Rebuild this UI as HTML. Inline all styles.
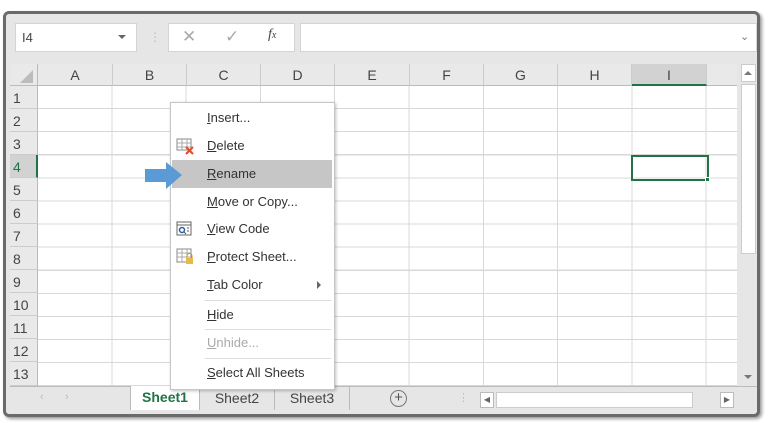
<!DOCTYPE html>
<html><head><style>
*{margin:0;padding:0;box-sizing:border-box}
body{width:768px;height:423px;background:#fff;position:relative;overflow:hidden;font-family:"Liberation Sans",sans-serif}
.a{position:absolute}
.frame{left:3px;top:11px;width:757px;height:406px;border:3px solid #6a6a6a;border-radius:6px;background:#e6e6e6;box-shadow:2px 2px 3px #999}
.grid{left:38px;top:86px;width:699px;height:300px;background:
repeating-linear-gradient(to right,transparent 0,transparent 73.3px,#d8d8d8 73.3px,#d8d8d8 74.3px),
repeating-linear-gradient(to bottom,transparent 0,transparent 22px,#d8d8d8 22px,#d8d8d8 23.1px),#fff}
.ch{top:64px;height:22px;font-size:14px;color:#444;text-align:center;line-height:22px;border-right:1px solid #ccc;border-bottom:1px solid #bbb;background:#e9e9e9}
.rh{left:10px;width:28px;height:23px;font-size:14px;color:#444;padding-left:3px;line-height:24px;border-bottom:1px solid #ccc;border-right:1px solid #bbb;background:#e9e9e9}
.mi{left:207px;font-size:13px;color:#333}
.sep{left:205px;width:126px;height:1px;background:#ddd}
.tab{top:387px;height:23px;font-size:14px;line-height:23px;text-align:center;color:#444;border-right:1px solid #bbb}
</style></head><body>
<div class="a frame"></div>
<div class="a" style="left:15px;top:23px;width:122px;height:29px;background:#fff;border:1px solid #d4d4d4;font-size:13px;color:#444;padding:6px 0 0 6px">I4</div>
<div class="a" style="left:118px;top:35px;width:0;height:0;border-left:4px solid transparent;border-right:4px solid transparent;border-top:4px solid #666"></div>
<div class="a" style="left:149px;top:30px;color:#bbb;font-size:12px">⋮</div>
<div class="a" style="left:168px;top:23px;width:127px;height:29px;background:#fff;border:1px solid #d4d4d4"></div>
<div class="a" style="left:182px;top:27px;color:#aaa;font-size:17px">✕</div>
<div class="a" style="left:225px;top:27px;color:#aaa;font-size:17px">✓</div>
<div class="a" style="left:268px;top:27px;color:#444;font-size:14px;font-style:italic;font-family:'Liberation Serif',serif">f<span style="font-size:10px">x</span></div>
<div class="a" style="left:300px;top:23px;width:457px;height:29px;background:#fff;border:1px solid #d4d4d4"></div>
<div class="a" style="left:740px;top:30px;color:#777;font-size:11px">⌄</div>
<div class="a" style="left:10px;top:64px;width:28px;height:22px;background:#e9e9e9;border-right:1px solid #bbb;border-bottom:1px solid #bbb"></div>
<div class="a" style="left:20px;top:70px;width:0;height:0;border-left:13px solid transparent;border-bottom:13px solid #bcbcbc"></div>
<div class="a ch" style="left:38px;width:75px">A</div>
<div class="a ch" style="left:113px;width:74px">B</div>
<div class="a ch" style="left:187px;width:74px">C</div>
<div class="a ch" style="left:261px;width:74px">D</div>
<div class="a ch" style="left:335px;width:75px">E</div>
<div class="a ch" style="left:410px;width:74px">F</div>
<div class="a ch" style="left:484px;width:74px">G</div>
<div class="a ch" style="left:558px;width:74px">H</div>
<div class="a ch" style="left:632px;width:75px;background:#d2d2d2;border-bottom:2px solid #217346">I</div>
<div class="a ch" style="left:707px;width:30px;border-right:none"></div>
<div class="a grid"></div>
<div class="a rh" style="top:86px">1</div>
<div class="a rh" style="top:109px">2</div>
<div class="a rh" style="top:132px">3</div>
<div class="a rh" style="top:155px;background:#d2d2d2;border-right:2px solid #217346;color:#217346">4</div>
<div class="a rh" style="top:178px">5</div>
<div class="a rh" style="top:201px">6</div>
<div class="a rh" style="top:224px">7</div>
<div class="a rh" style="top:247px">8</div>
<div class="a rh" style="top:270px">9</div>
<div class="a rh" style="top:293px">10</div>
<div class="a rh" style="top:316px">11</div>
<div class="a rh" style="top:339px">12</div>
<div class="a rh" style="top:362px;height:24px">13</div>
<div class="a" style="left:631px;top:155px;width:78px;height:26px;border:2px solid #217346"></div>
<div class="a" style="left:705px;top:177px;width:5px;height:5px;background:#217346;border:1px solid #fff"></div>
<div class="a" style="left:739px;top:64px;width:18px;height:322px;background:#e6e6e6"></div>
<div class="a" style="left:741px;top:64px;width:15px;height:18px;background:#fff;border:1px solid #ccc"></div>
<div class="a" style="left:744px;top:71px;border-left:4px solid transparent;border-right:4px solid transparent;border-bottom:4px solid #777"></div>
<div class="a" style="left:741px;top:84px;width:15px;height:170px;background:#fff;border:1px solid #ccc"></div>
<div class="a" style="left:744px;top:375px;border-left:4px solid transparent;border-right:4px solid transparent;border-top:4px solid #777"></div>
<div class="a" style="left:10px;top:386px;width:747px;height:26px;background:#e6e6e6;border-top:1px solid #bbb"></div>
<div class="a" style="left:40px;top:391px;color:#bbb;font-size:11px">‹&nbsp;&nbsp;&nbsp;&nbsp;&nbsp;&nbsp;&nbsp;›</div>
<div class="a tab" style="left:130px;width:70px;background:#fff;color:#217346;font-weight:bold;top:386px;height:24px;border-left:1px solid #bbb">Sheet1</div>
<div class="a tab" style="left:200px;width:75px">Sheet2</div>
<div class="a tab" style="left:275px;width:75px">Sheet3</div>
<div class="a" style="left:390px;top:390px;width:17px;height:17px;border:1px solid #777;border-radius:50%;text-align:center;line-height:14px;font-size:15px;color:#555">+</div>
<div class="a" style="left:458px;top:391px;color:#bbb;font-size:11px">⋮</div>
<div class="a" style="left:480px;top:392px;width:14px;height:16px;background:#fff;border:1px solid #bbb;font-size:8px;color:#666;text-align:center;line-height:14px">◀</div>
<div class="a" style="left:496px;top:392px;width:197px;height:16px;background:#fff;border:1px solid #ccc"></div>
<div class="a" style="left:720px;top:392px;width:14px;height:16px;background:#fff;border:1px solid #bbb;font-size:8px;color:#666;text-align:center;line-height:14px">▶</div>
<div class="a" style="left:170px;top:102px;width:165px;height:288px;background:#fff;border:1px solid #c6c6c6;box-shadow:1px 1px 3px rgba(0,0,0,.25)"></div>
<div class="a" style="left:172px;top:160px;width:160px;height:28px;background:#c6c6c6"></div>
<div class="a mi" style="top:110px"><u>I</u>nsert...</div>
<div class="a mi" style="top:138px"><u>D</u>elete</div>
<div class="a mi" style="top:166px"><u>R</u>ename</div>
<div class="a mi" style="top:194px"><u>M</u>ove or Copy...</div>
<div class="a mi" style="top:221px"><u>V</u>iew Code</div>
<div class="a mi" style="top:249px"><u>P</u>rotect Sheet...</div>
<div class="a mi" style="top:277px"><u>T</u>ab Color</div>
<div class="a" style="left:317px;top:281px;border-top:4px solid transparent;border-bottom:4px solid transparent;border-left:4px solid #666"></div>
<div class="a sep" style="top:300px"></div>
<div class="a mi" style="top:307px"><u>H</u>ide</div>
<div class="a sep" style="top:329px"></div>
<div class="a mi" style="top:335px;color:#aaa"><u>U</u>nhide...</div>
<div class="a sep" style="top:358px"></div>
<div class="a mi" style="top:365px"><u>S</u>elect All Sheets</div>
<svg class="a" style="left:176px;top:138px" width="20" height="18"><rect x="1" y="1" width="14" height="11" fill="#fff" stroke="#888"/><path d="M1 5H15M1 9H15M6 1V12M11 1V12" stroke="#aaa"/><path d="M10 9L17 16M17 9L10 16" stroke="#e04a2a" stroke-width="2"/></svg>
<svg class="a" style="left:176px;top:221px" width="18" height="16"><rect x="1" y="1" width="14" height="13" fill="#fff" stroke="#666"/><path d="M1 4H15" stroke="#666"/><circle cx="6" cy="9" r="2.5" fill="none" stroke="#2b5d9b" stroke-width="1.5"/><path d="M8 11L10 13M11 7H13M11 10H13" stroke="#555"/></svg>
<svg class="a" style="left:176px;top:248px" width="20" height="18"><rect x="1" y="1" width="14" height="13" fill="#fff" stroke="#888"/><path d="M1 5H15M1 9H15M6 1V14M11 1V14" stroke="#aaa"/><rect x="10" y="10" width="7" height="6" fill="#e8b84a"/><path d="M11 10V8a2.5 2.5 0 0 1 5 0V10" fill="none" stroke="#c7962e"/></svg>
<svg class="a" style="left:144px;top:162px" width="40" height="28"><path d="M1 7H22V0L38 13L22 27V20H1Z" fill="#5b9bd5"/></svg>
</body></html>
